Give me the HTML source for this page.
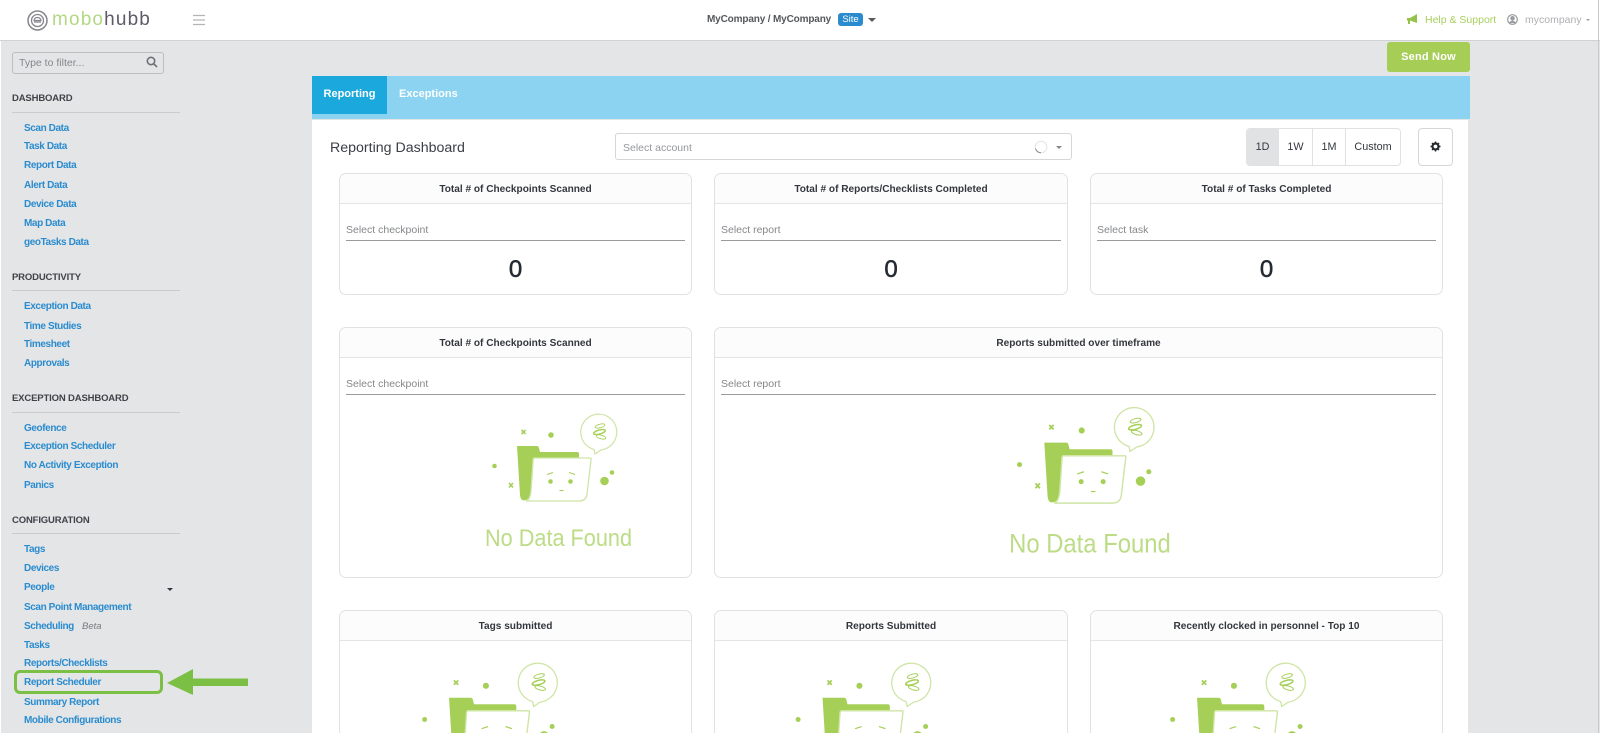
<!DOCTYPE html>
<html><head><meta charset="utf-8"><title>mobohubb</title>
<style>
html,body{margin:0;padding:0;width:1600px;height:733px;overflow:hidden;background:#e4e5e7;font-family:"Liberation Sans",sans-serif;color:#33373d}
#wrap{position:absolute;left:0;top:0;width:1600px;height:733px;overflow:hidden}
.a{position:absolute;white-space:nowrap}
#hd{left:0;top:0;width:1600px;height:40px;background:#fff;border-bottom:1px solid #d0d2d4}
.h{left:12px;margin-top:1px;font-size:9.5px;font-weight:bold;color:#3f4348;line-height:12px;letter-spacing:-.15px}
.r{left:12px;width:168px;height:1px;background:#c9cbcd}
.l{left:24px;margin-top:1px;font-size:10px;font-weight:bold;color:#2a8ccf;line-height:12px;letter-spacing:-.4px}
.card{position:absolute;box-sizing:border-box;background:#fff;border:1px solid #dfe1e3;border-radius:7px;overflow:hidden}
.open{height:123px;border-bottom:0;border-radius:7px 7px 0 0}
.ch{position:absolute;box-sizing:border-box;left:0;right:0;top:0;height:30px;background:#fcfcfc;border-bottom:1px solid #e3e4e6;text-align:center;font-size:10.1px;font-weight:bold;line-height:32px;color:#33373d}
.sel{position:absolute;left:6px;right:6px;height:20px;border-bottom:1px solid #9a9b9e;font-size:10.5px;line-height:21px;color:#85878a}
.z{position:absolute;left:0;right:0;text-align:center;font-size:24px;line-height:30px;color:#252a33;-webkit-text-stroke:.5px #252a33}
.b{position:absolute;top:0;height:37px;line-height:37px;text-align:center;font-size:10.8px;color:#33373d;border-right:1px solid #dfe1e3;box-sizing:border-box}
svg{position:absolute;display:block;overflow:hidden}
</style></head><body>
<div id="wrap">
<svg width="0" height="0" style="position:absolute"><defs>
<g id="ill">
<path d="M77 56H97Q98.500 56 99 58L100 62H137Q139 62 139 64L139 67.500H94Q93 68 92.500 72L91 101Q90 110 84 110.500Q80.500 110.500 80 105Z" fill="#a6cf58"/>
<path d="M94 68H150.500Q151.500 68 151 70L147 104Q146 111 139 111H86Q90 110 91 101L93 72Q93 68 94 68Z" fill="#fff" stroke="#cfe5a6" stroke-width="1.300"/>
<path d="M107 84.500L113 82.500M129 82.500L135 84.500" stroke="#a6cf58" stroke-width="1.100" fill="none"/>
<circle cx="110.500" cy="91.500" r="2.300" fill="#a6cf58"/><circle cx="130.500" cy="91.500" r="2.300" fill="#a6cf58"/>
<path d="M119.500 100.500H123.500" stroke="#a6cf58" stroke-width="1.100"/>
<circle cx="111" cy="45" r="2.800" fill="#a6cf58"/><circle cx="54.500" cy="76" r="2.300" fill="#a6cf58"/>
<circle cx="164.500" cy="91" r="4.300" fill="#a6cf58"/><circle cx="172" cy="82.500" r="2.300" fill="#a6cf58"/>
<path d="M81.500 40L85.500 44M85.500 40L81.500 44M69 93L73 97.500M73 93L69 97.500" stroke="#a6cf58" stroke-width="1.600"/>
<path d="M161 60A18 18 0 1 0 154 59.500L155 64Z" fill="#fff" stroke="#cfe5a6" stroke-width="1.200"/>
<g fill="none" stroke="#a6cf58" stroke-width=".9"><ellipse cx="160" cy="36" rx="5" ry="1.800" transform="rotate(-15 160 36)"/><ellipse cx="159.500" cy="42" rx="6" ry="2" transform="rotate(-15 159.500 42)" stroke-width="1.400"/><ellipse cx="161" cy="47" rx="5" ry="1.800" transform="rotate(15 161 47)"/></g>
<text x="118.500" y="156" text-anchor="middle" font-family="Liberation Sans" font-size="24" textLength="147" lengthAdjust="spacingAndGlyphs" fill="#bcdc86">No Data Found</text>
</g></defs></svg>

<div class="a" id="hd"></div>
<svg style="left:27px;top:10px;overflow:visible" width="21" height="21" viewBox="0 0 21 21" fill="none" stroke="#85868c"><circle cx="10.500" cy="10.500" r="9.500" stroke-width="1.500"/><circle cx="10.500" cy="10.500" r="6" stroke-width="1.300"/><path d="M7 10.500a3.500 3 0 0 1 7 0zM7 12h7" stroke-width="1.200"/></svg>
<div class="a" style="left:52px;top:7px;font-size:19px;line-height:26px;letter-spacing:1.150px;color:#b3d884">mobo<span style="color:#5e5a68">hubb</span></div>
<svg style="left:193px;top:14px" width="12" height="12" fill="none" stroke="#b3b4b6" stroke-width="1.200"><path d="M0 1.500H12M0 6H12M0 10.500H12"/></svg>
<div class="a" style="left:707px;top:13px;font-size:10px;line-height:14px;font-weight:bold;color:#55585c;letter-spacing:-.15px">MyCompany / MyCompany</div>
<div class="a" style="left:838px;top:13px;width:25px;height:13px;background:#2a8ccf;border-radius:3px;color:#fff;text-align:center;font-size:9.500px;line-height:13px">Site</div>
<div class="a" style="left:868px;top:18px;border:4px solid transparent;border-top-color:#55585c;border-bottom:0"></div>
<svg style="left:1407px;top:14px" width="12" height="11" viewBox="0 0 12 11"><path d="M0 4H3L10 0V9L3 6.500V10H1V6.500H0Z" fill="#94c34a"/></svg>
<div class="a" style="left:1425px;top:13px;font-size:10.500px;line-height:14px;color:#a8cf5c">Help &amp; Support</div>
<svg style="left:1507px;top:14px;overflow:visible" width="11" height="11" viewBox="0 0 11 11" fill="none" stroke="#9b9ca0" stroke-width="1.200"><circle cx="5.500" cy="5.500" r="4.800"/><circle cx="5.500" cy="4.300" r="1.700" fill="#9b9ca0"/><path d="M2.500 9Q5.500 5.500 8.500 9" fill="#9b9ca0"/></svg>
<div class="a" style="left:1525px;top:13px;font-size:10.500px;line-height:14px;color:#aeafb2">mycompany</div>
<div class="a" style="left:1586px;top:19px;border:2.500px solid transparent;border-top-color:#999;border-bottom:0"></div>
<div class="a" style="left:1598px;top:0;width:1px;height:733px;background:#c9cacc"></div>
<div class="a" style="left:0;top:41px;width:1px;height:692px;background:#fff"></div>

<div class="a" style="left:12px;top:52px;width:152px;height:22px;box-sizing:border-box;border:1px solid #bbbdbf;border-radius:3px;font-size:10.500px;line-height:20px;padding-left:6px;color:#85878a">Type to filter...</div>
<svg style="left:146px;top:56px" width="12" height="12" fill="none" stroke="#6e7073" stroke-width="1.600"><circle cx="5" cy="5" r="3.700"/><path d="M7.800 7.800L11 11"/></svg>

<div class="a h" style="top:92px">DASHBOARD</div><div class="a r" style="top:112px"></div>
<div class="a l" style="top:122px">Scan Data</div>
<div class="a l" style="top:140px">Task Data</div>
<div class="a l" style="top:159px">Report Data</div>
<div class="a l" style="top:179px">Alert Data</div>
<div class="a l" style="top:198px">Device Data</div>
<div class="a l" style="top:217px">Map Data</div>
<div class="a l" style="top:236px">geoTasks Data</div>
<div class="a h" style="top:271px">PRODUCTIVITY</div><div class="a r" style="top:290px"></div>
<div class="a l" style="top:300px">Exception Data</div>
<div class="a l" style="top:320px">Time Studies</div>
<div class="a l" style="top:338px">Timesheet</div>
<div class="a l" style="top:357px">Approvals</div>
<div class="a h" style="top:392px">EXCEPTION DASHBOARD</div><div class="a r" style="top:412px"></div>
<div class="a l" style="top:422px">Geofence</div>
<div class="a l" style="top:440px">Exception Scheduler</div>
<div class="a l" style="top:459px">No Activity Exception</div>
<div class="a l" style="top:479px">Panics</div>
<div class="a h" style="top:514px">CONFIGURATION</div><div class="a r" style="top:533px"></div>
<div class="a l" style="top:543px">Tags</div>
<div class="a l" style="top:562px">Devices</div>
<div class="a l" style="top:581px">People</div>
<div class="a" style="left:167px;top:588px;border:3px solid transparent;border-top-color:#33373d;border-bottom:0"></div>
<div class="a l" style="top:601px">Scan Point Management</div>
<div class="a l" style="top:620px">Scheduling</div>
<div class="a" style="left:82px;top:621px;font-size:9.500px;line-height:12px;font-style:italic;color:#77797c">Beta</div>
<div class="a l" style="top:639px">Tasks</div>
<div class="a l" style="top:657px">Reports/Checklists</div>
<div class="a l" style="top:676px">Report Scheduler</div>
<div class="a l" style="top:696px">Summary Report</div>
<div class="a l" style="top:714px">Mobile Configurations</div>
<div class="a" style="left:14px;top:670px;width:149px;height:24px;box-sizing:border-box;border:3px solid #7cbf45;border-radius:6px"></div>
<svg style="left:0;top:0" width="260" height="733"><path d="M167 683L193 669V678.500H248V686H193V695Z" fill="#7cbf45"/></svg>

<div class="a" style="left:1387px;top:42px;width:83px;height:30px;background:#a6cd55;border-radius:3px;color:#fff;text-align:center;font-size:11px;font-weight:bold;line-height:31px;letter-spacing:.2px">Send Now</div>
<div class="a" style="left:312px;top:76px;width:1158px;height:43px;background:#8bd3f0"></div>
<div class="a" style="left:312px;top:76px;width:75px;height:38px;background:#1ba8dc;color:#fff;text-align:center;font-size:11px;font-weight:bold;line-height:37px">Reporting</div>
<div class="a" style="left:399px;top:76px;color:#fff;font-size:11px;font-weight:bold;line-height:37px">Exceptions</div>
<div class="a" style="left:312px;top:120px;width:1156px;height:613px;background:#fff"></div>

<div class="a" style="left:330px;top:138px;font-size:14.200px;line-height:20px;color:#3b3f45">Reporting Dashboard</div>
<div class="a" style="left:615px;top:133px;width:457px;height:27px;box-sizing:border-box;border:1px solid #d5d6d8;border-radius:3px;font-size:10.500px;line-height:28px;padding-left:7px;color:#96989b">Select account</div>
<svg style="left:1034px;top:140px" width="14" height="14" fill="none"><circle cx="7" cy="7" r="5.800" stroke="#e3e4e5"/><path d="M1.500 8.500A5.800 5.800 0 0 0 7 12.800" stroke="#8b8c8f"/></svg>
<div class="a" style="left:1056px;top:146px;border:3px solid transparent;border-top-color:#888;border-bottom:0"></div>

<div class="a" style="left:1246px;top:128px;width:155px;height:38px;box-sizing:border-box;border:1px solid #dfe1e3;border-radius:4px;overflow:hidden">
<div class="b" style="left:0;width:32px;background:#e0e2e3">1D</div>
<div class="b" style="left:32px;width:34px">1W</div>
<div class="b" style="left:66px;width:33px">1M</div>
<div class="b" style="left:99px;width:54px;border:0">Custom</div>
</div>
<div class="a" style="left:1418px;top:128px;width:35px;height:38px;box-sizing:border-box;border:1px solid #d5d6d8;border-radius:4px"></div>
<svg style="left:1429.500px;top:140.500px" width="11" height="11" viewBox="0 0 11 11"><circle cx="5.500" cy="5.500" r="3" fill="none" stroke="#26292e" stroke-width="2.200"/><path d="M5.500 .5V10.500M.5 5.500H10.500M2 2L9 9M9 2L2 9" stroke="#26292e" stroke-width="1.400" stroke-dasharray="2 6 2"/></svg>

<div class="card" style="left:339px;top:173px;width:353px;height:122px"><div class="ch">Total # of Checkpoints Scanned</div><div class="sel" style="top:46px">Select checkpoint</div><div class="z" style="top:81px">0</div></div>
<div class="card" style="left:714px;top:173px;width:354px;height:122px"><div class="ch">Total # of Reports/Checklists Completed</div><div class="sel" style="top:46px">Select report</div><div class="z" style="top:81px">0</div></div>
<div class="card" style="left:1090px;top:173px;width:353px;height:122px"><div class="ch">Total # of Tasks Completed</div><div class="sel" style="top:46px">Select task</div><div class="z" style="top:81px">0</div></div>

<div class="card" style="left:339px;top:327px;width:353px;height:251px"><div class="ch">Total # of Checkpoints Scanned</div><div class="sel" style="top:46px">Select checkpoint</div></div>
<div class="card" style="left:714px;top:327px;width:729px;height:251px"><div class="ch">Reports submitted over timeframe</div><div class="sel" style="top:46px">Select report</div></div>

<div class="card open" style="left:339px;top:610px;width:353px"><div class="ch">Tags submitted</div></div>
<div class="card open" style="left:714px;top:610px;width:354px"><div class="ch">Reports Submitted</div></div>
<div class="card open" style="left:1090px;top:610px;width:353px"><div class="ch">Recently clocked in personnel - Top 10</div></div>

<svg style="left:0;top:0" width="1600" height="733" viewBox="0 0 1600 733">
<g transform="translate(440 390)"><use href="#ill"/></g>
<g transform="translate(959.600 381) scale(1.100)"><use href="#ill"/></g>
<g transform="translate(365.500 637) scale(1.085)"><use href="#ill"/></g>
<g transform="translate(739 637) scale(1.085)"><use href="#ill"/></g>
<g transform="translate(1113.500 637) scale(1.085)"><use href="#ill"/></g>
</svg>
</div>
</body></html>
